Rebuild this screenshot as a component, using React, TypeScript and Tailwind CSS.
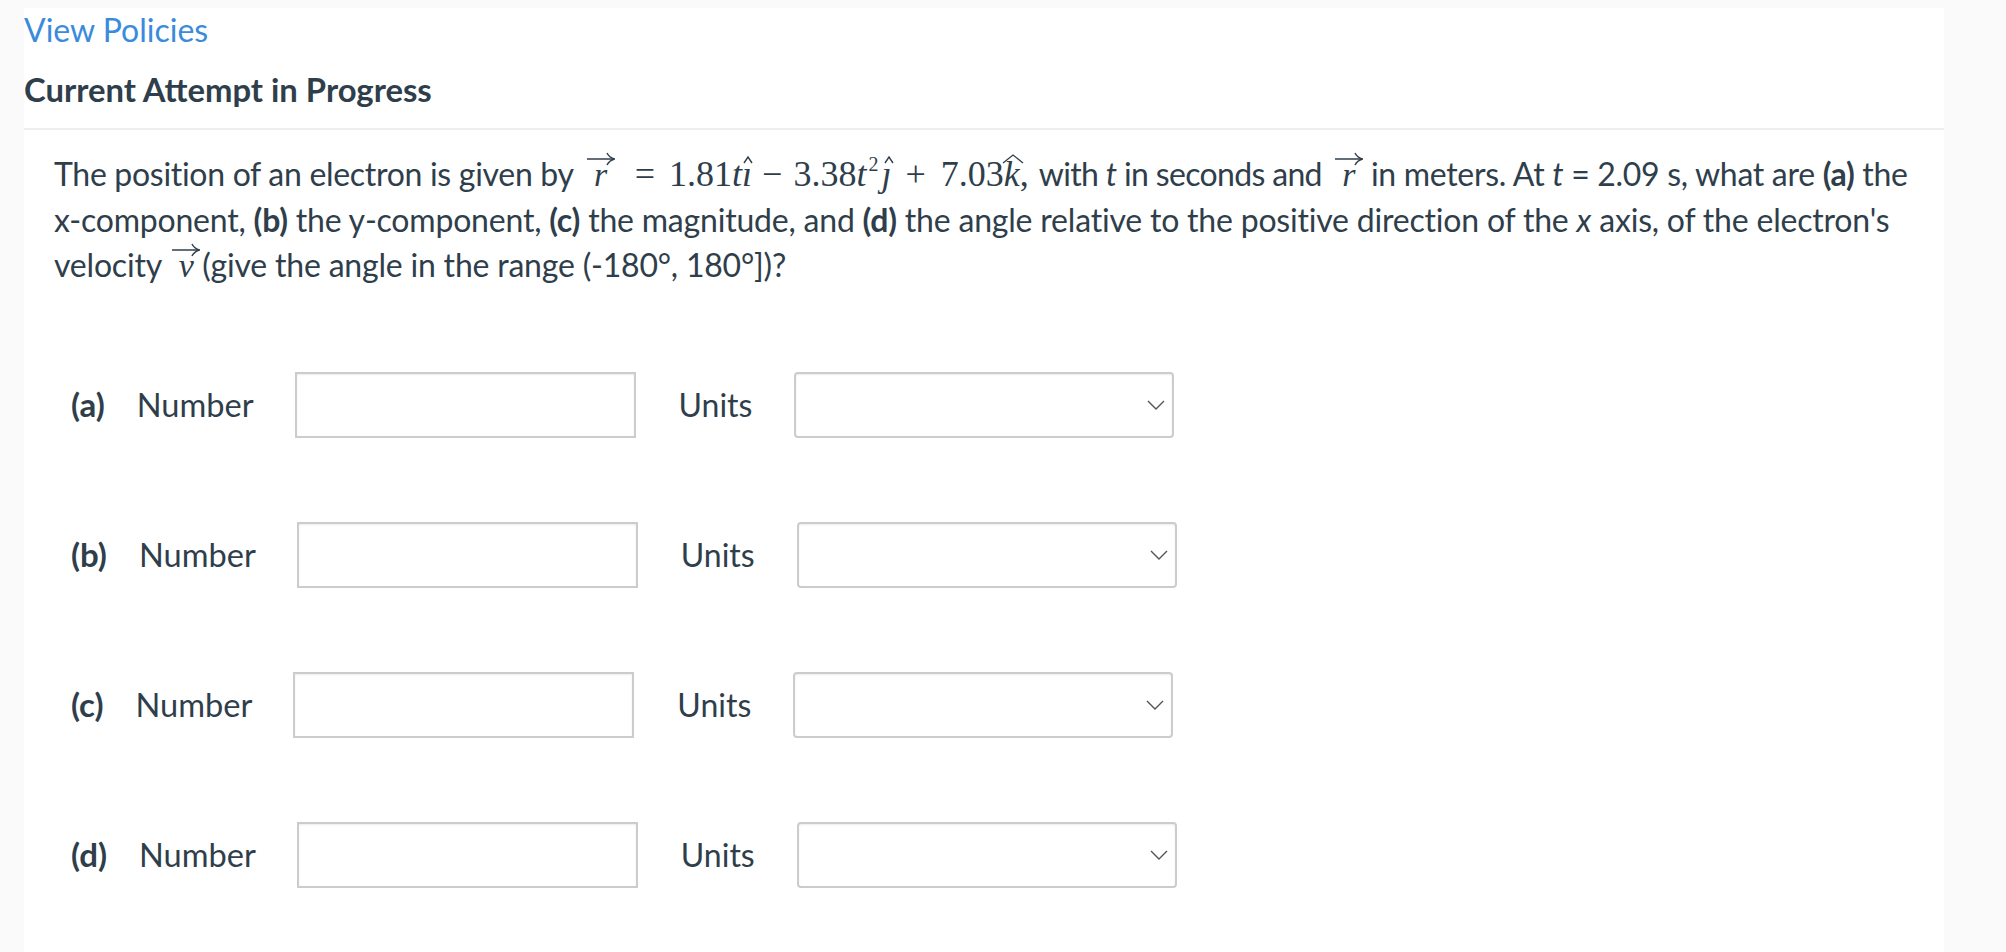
import React from "react";

const Arrow = () => (
  <svg className="absolute left-0 top-[0px] pointer-events-none" width="28" height="14" viewBox="0 0 28 14" fill="none" stroke="#2f3e4b" strokeWidth="1.5">
    <path d="M0 7H26" />
    <path d="M20 1C21.5 4 24 6 27.5 7C24 8 21.5 10 20 13" />
  </svg>
);

const Vec = ({ c }: { c: string }) => (
  <span className="relative inline-block w-[28px] text-center [font-family:'Liberation_Serif',serif] text-[34px] tracking-normal italic">
    <Arrow />
    {c}
  </span>
);

const Hat = ({ c, wide = false }: { c: string; wide?: boolean }) => (
  <span className="relative inline-block italic">
    {c === "i" ? "ı" : c === "j" ? "ȷ" : c}
    {wide ? (
      <svg className="absolute left-[-2px] top-[1px]" width="22" height="11" viewBox="0 0 22 11" fill="none" stroke="#2f3e4b" strokeWidth="1.3">
        <path d="M1 10L11 2L21 10" />
      </svg>
    ) : c === "j" ? (
      <svg className="absolute left-[2px] top-[3px]" width="12" height="9" viewBox="0 0 12 9" fill="none" stroke="#2f3e4b" strokeWidth="1.4">
        <path d="M2 8L6 2L10 8" />
      </svg>
    ) : (
      <svg className="absolute left-[0px] top-[3px]" width="12" height="9" viewBox="0 0 12 9" fill="none" stroke="#2f3e4b" strokeWidth="1.4">
        <path d="M2 8L6 2L10 8" />
      </svg>
    )}
  </span>
);

const Row = ({ label }: { label: string }) => (
  <div className="flex items-center h-[66px] text-[32.6px]">
    <b className="font-bold text-[33px]">({label})</b>
    <span className="ml-[32px]">Number</span>
    <input type="text" aria-label="Number" className="ml-[41px] w-[341px] h-[66px] border-2 border-[#cccccc] bg-white shadow-[inset_0_1px_2px_rgba(0,0,0,0.08)]" />
    <span className="ml-[43px] text-[32px]">Units</span>
    <div className="relative ml-[42px] w-[380px] h-[66px] border-2 border-[#cccccc] rounded-[4px] bg-white shadow-[inset_0_1px_2px_rgba(0,0,0,0.08)]">
      <svg className="absolute right-[7px] top-[26px]" width="18" height="10" viewBox="0 0 18 10" fill="none" stroke="#555555" strokeWidth="1.4">
        <path d="M1 1L9 9L17 1" />
      </svg>
    </div>
  </div>
);

export default function App() {
  return (
    <div className="h-[952px] overflow-hidden bg-[#fafafa] pl-[24px] pt-[8px] [font-family:Lato,sans-serif] text-[#2f3e4b]">
      <div className="w-[1920px] h-[944px] bg-white">
        <a href="#" className="block h-[44px] text-[32px] leading-[44px] text-[#3b8bdc]">View Policies</a>
        <h2 className="mt-[16px] h-[44px] text-[32.8px] leading-[44px] font-bold">Current Attempt in Progress</h2>
        <div className="mt-[16px] h-[2px] bg-[#eeeeee]" />
        <p className="mt-[21px] ml-[30px] text-[32px] leading-[45px] tracking-[-0.2px] whitespace-nowrap">
          <span className="tracking-[-0.3px]">The position of an electron is given by</span> <span className="ml-[5px]"><Vec c="r" /></span>
          <span className="[font-family:'Liberation_Serif',serif] text-[36px] tracking-normal">
            <span className="ml-[20px] mr-[14px]">=</span>1.81<span className="italic">t</span><Hat c="i" />
            <span className="ml-[10px] mr-[11px]">−</span>3.38<span className="italic">t</span><sup className="text-[20px] leading-none top-[-15px] ml-[2px] mr-[3px]">2</sup><Hat c="j" />
            <span className="ml-[14px] mr-[15px]">+</span>7.03<Hat c="k" wide />,
          </span>{" "}
          <span className="ml-[2px] tracking-[-0.66px]">with <i>t</i> in seconds and</span> <span className="ml-[5px]"><Vec c="r" /></span> <span className="tracking-[-0.3px]">in meters. At <i>t</i> = 2.09 s, what are <b>(a)</b> the</span><br />
          x-component, <b>(b)</b> the y-component, <b>(c)</b> the magnitude, and <b>(d)</b> the angle relative to the positive direction of the <i>x</i> axis, of the electron's<br />
          velocity <span className="ml-[3px]"><Vec c="v" /></span><span className="ml-[2px]">(give the angle in the range (-180°, 180°])?</span>
        </p>
        <div className="mt-[84px] ml-[47px] flex flex-col gap-[84px]">
          <Row label="a" />
          <Row label="b" />
          <Row label="c" />
          <Row label="d" />
        </div>
      </div>
    </div>
  );
}
